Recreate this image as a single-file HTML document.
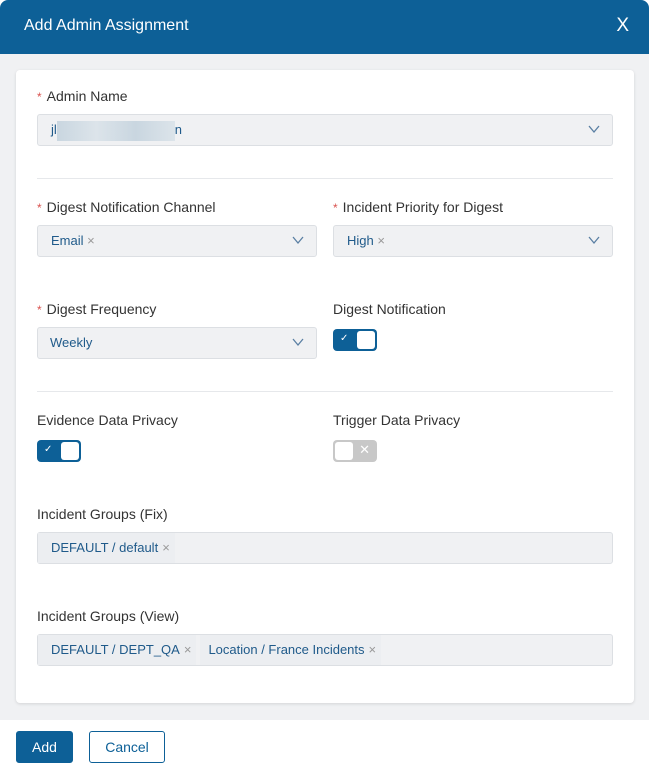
<!DOCTYPE html>
<html><head><meta charset="utf-8"><style>
*{box-sizing:border-box;margin:0;padding:0}
body{width:649px;height:771px;font-family:"Liberation Sans",Arial,sans-serif;background:#fff;position:relative;overflow:hidden}
.hdr{position:absolute;left:0;top:0;width:649px;height:54px;background:#0d6097;border-radius:8px 8px 0 0;color:#fff}
.hdr .t{position:absolute;left:24px;top:17px;font-size:16px}
.hdr .x{position:absolute;right:20px;top:15px;font-size:19px}
.bd{position:absolute;left:0;top:54px;width:649px;height:666px;background:#f0f1f3}
.card{position:absolute;left:16px;top:70px;width:618px;height:633px;background:#fff;border-radius:4px;box-shadow:0 1px 3px rgba(0,0,0,.12)}
.l{position:absolute;font-size:14px;color:#333}
.l i{color:#d9534f;font-style:normal;margin-right:5px;font-size:12px}
.in{position:absolute;height:32px;background:#f0f1f3;border:1px solid #dcdfe3;border-radius:3px;font-size:13px;color:#1f5a8a;padding-left:13px;line-height:30px}
.chev{position:absolute;right:12px;top:10px}
.tag{display:inline-block;background:#eceef1;padding:0 5px 0 13px;margin-right:4px}
.tag span{color:#999;margin-left:4px}
.hr{position:absolute;left:37px;width:576px;height:1px;background:#e6e8eb}
.tg{position:absolute;width:44px;height:22px;border-radius:4px;background:#0d6097}
.tg .k{position:absolute;right:2px;top:2px;width:18px;height:18px;background:#fff;border-radius:3px}
.tg .c{position:absolute;left:7px;top:4px;color:#fff;font-size:10px}
.off{background:#c8c8c8}.off .k{left:2px;right:auto}.off .c{left:auto;right:7px;top:2px;font-size:13px}
.btn{position:absolute;top:731px;height:32px;border-radius:3px;font-size:14px;line-height:30px;text-align:center}
</style></head><body>
<div class="hdr"><div class="t">Add Admin Assignment</div><div class="x">X</div></div>
<div class="bd"></div>
<div class="card"></div>
<svg width="0" height="0" style="position:absolute"><defs><path id="cv" d="M1 1 L6 7 L11 1" fill="none" stroke="#5a7fa3" stroke-width="1.3"/></defs></svg>

<div class="l" style="left:37px;top:88px"><i>*</i>Admin Name</div>
<div class="in" style="left:37px;top:114px;width:576px">jl<span style="display:inline-block;width:118px;height:20px;vertical-align:middle;background:linear-gradient(90deg,#c9d6e0,#dce4ea,#c9d6e0,#dce4ea)"></span>n<svg class="chev" width="12" height="9"><use href="#cv"/></svg></div>
<div class="hr" style="top:178px"></div>

<div class="l" style="left:37px;top:199px"><i>*</i>Digest Notification Channel</div>
<div class="l" style="left:333px;top:199px"><i>*</i>Incident Priority for Digest</div>
<div class="in" style="left:37px;top:225px;width:280px">Email <span style="color:#999">×</span><svg class="chev" width="12" height="9"><use href="#cv"/></svg></div>
<div class="in" style="left:333px;top:225px;width:280px">High <span style="color:#999">×</span><svg class="chev" width="12" height="9"><use href="#cv"/></svg></div>

<div class="l" style="left:37px;top:301px"><i>*</i>Digest Frequency</div>
<div class="l" style="left:333px;top:301px">Digest Notification</div>
<div class="in" style="left:37px;top:327px;width:280px;padding-left:12px">Weekly<svg class="chev" width="12" height="9"><use href="#cv"/></svg></div>
<div class="tg" style="left:333px;top:329px"><span class="c">✓</span><div class="k"></div></div>
<div class="hr" style="top:391px"></div>

<div class="l" style="left:37px;top:412px">Evidence Data Privacy</div>
<div class="l" style="left:333px;top:412px">Trigger Data Privacy</div>
<div class="tg" style="left:37px;top:440px"><span class="c">✓</span><div class="k"></div></div>
<div class="tg off" style="left:333px;top:440px"><div class="k"></div><span class="c">✕</span></div>

<div class="l" style="left:37px;top:506px">Incident Groups (Fix)</div>
<div class="in" style="left:37px;top:532px;width:576px;padding-left:0"><span class="tag">DEFAULT / default<span>×</span></span></div>

<div class="l" style="left:37px;top:608px">Incident Groups (View)</div>
<div class="in" style="left:37px;top:634px;width:576px;padding-left:0"><span class="tag">DEFAULT / DEPT_QA<span>×</span></span><span class="tag" style="padding-left:8px">Location / France Incidents<span>×</span></span></div>

<div class="btn" style="left:16px;width:57px;background:#0d6097;color:#fff;border:1px solid #0d6097">Add</div>
<div class="btn" style="left:89px;width:76px;background:#fff;color:#0d6097;border:1px solid #0d6097">Cancel</div>
</body></html>
